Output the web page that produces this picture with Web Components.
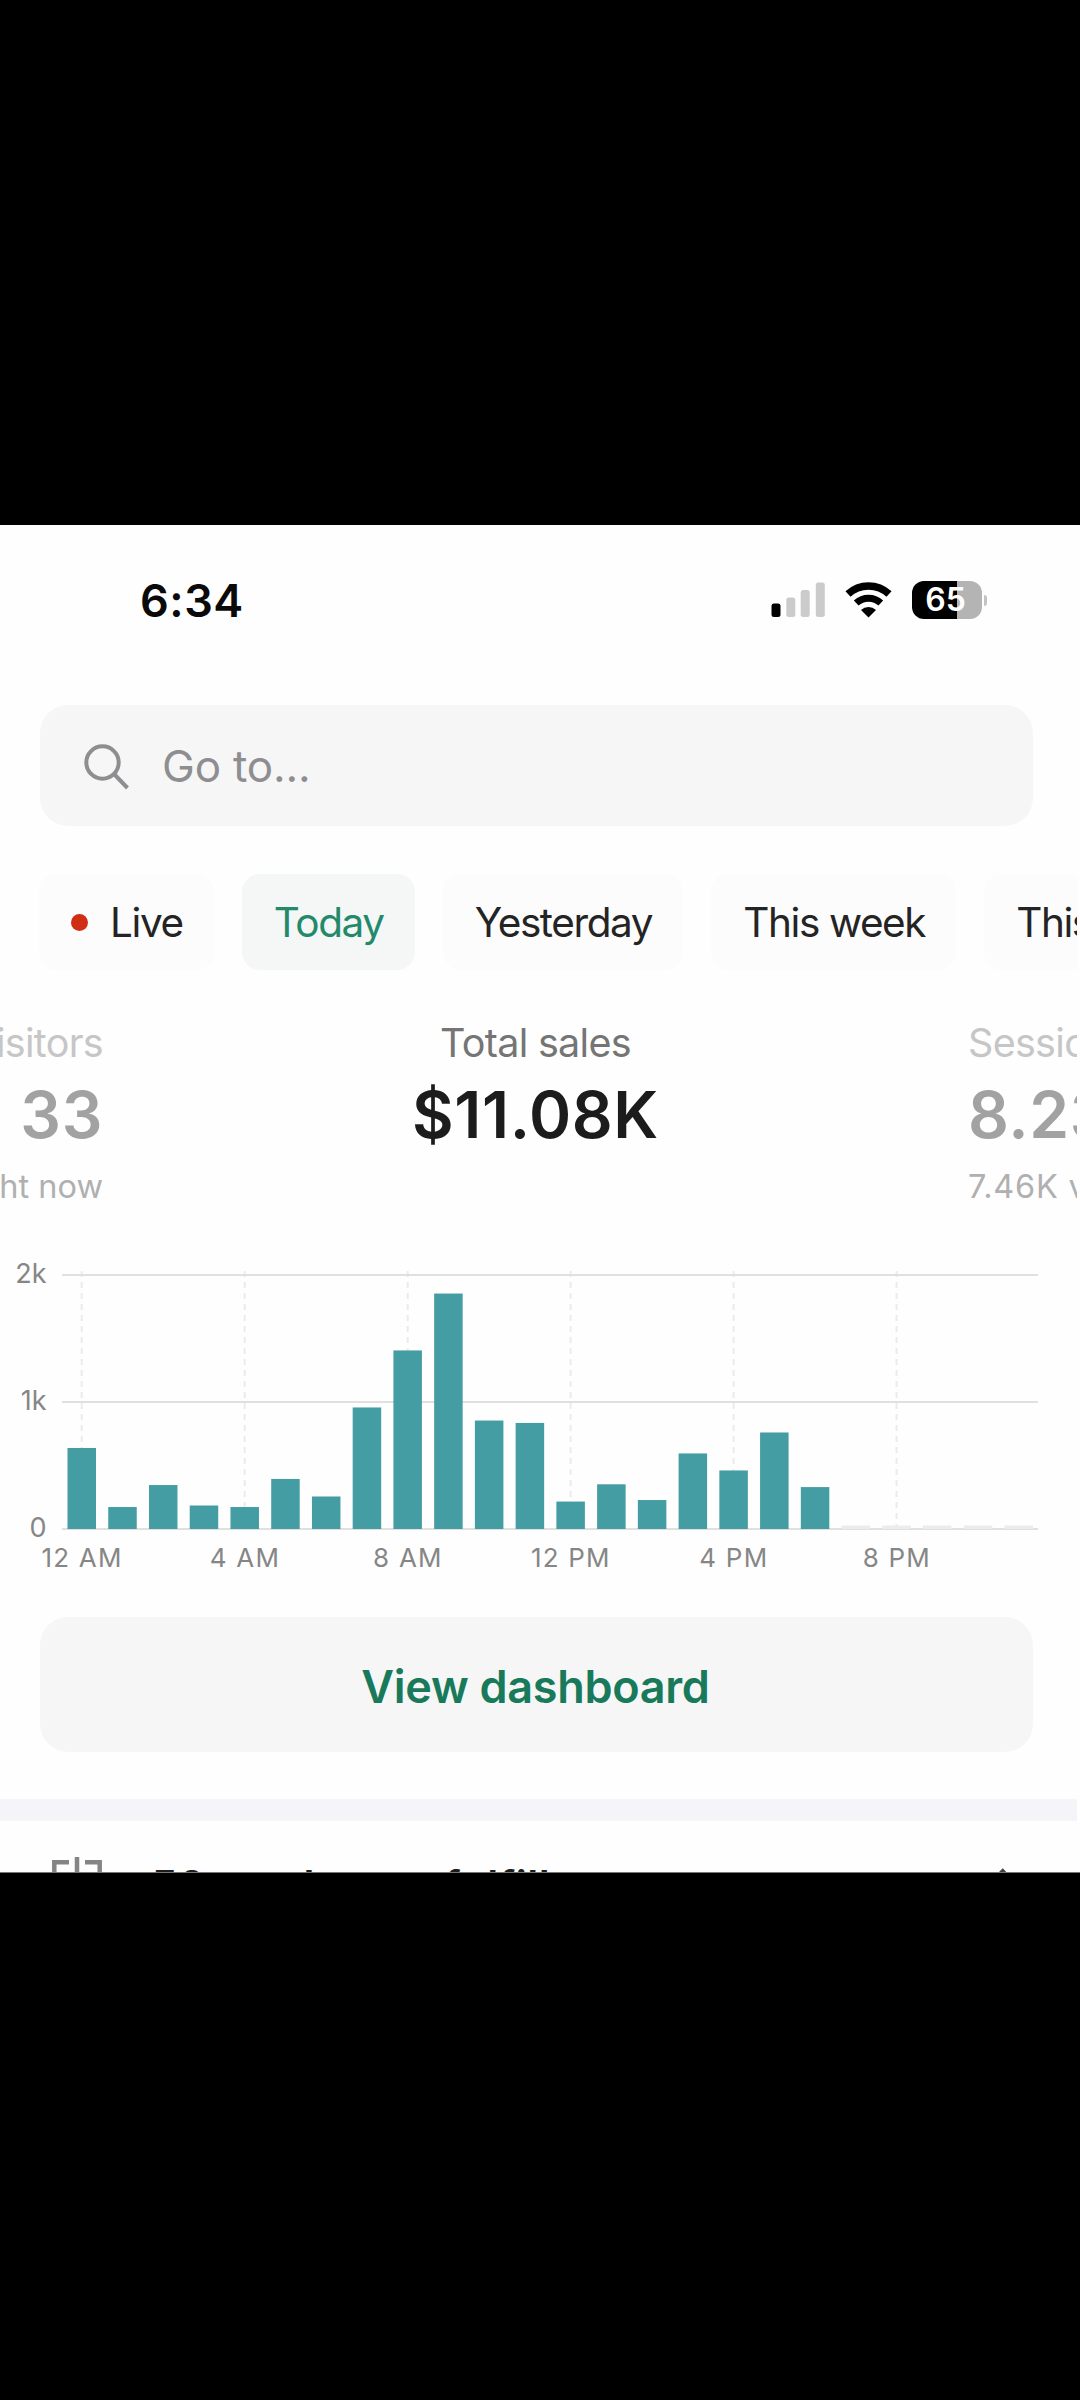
<!DOCTYPE html>
<html lang="en">
<head>
<meta charset="UTF-8">
<title>Store overview</title>
<style>
    body {
        margin: 0;
        background: #000;
        font-family: Inter, "Liberation Sans", sans-serif;
    }
</style>
</head>
<body>
<phone-screen>
    <status-bar time="6:34" battery="65"></status-bar>
    <search-field>Go to...</search-field>
    <range-tabs>
        <range-chip live>Live</range-chip>
        <range-chip selected>Today</range-chip>
        <range-chip>Yesterday</range-chip>
        <range-chip>This week</range-chip>
        <range-chip>This month</range-chip>
    </range-tabs>
    <metric-carousel>
        <metric-card side="left">
            <span slot="label">Visitors</span>
            <span slot="value">33</span>
            <span slot="note">right now</span>
        </metric-card>
        <metric-card>
            <span slot="label">Total sales</span>
            <span slot="value">$11.08K</span>
        </metric-card>
        <metric-card side="right">
            <span slot="label">Sessions</span>
            <span slot="value">8.23K</span>
            <span slot="note">7.46K visitors</span>
        </metric-card>
    </metric-carousel>
    <sales-chart></sales-chart>
    <action-button>View dashboard</action-button>
    <section-divider></section-divider>
    <task-row>50+ orders to fulfill</task-row>
</phone-screen>

<script>
class PhoneScreen extends HTMLElement {
    constructor() {
        super();
        this.attachShadow({ mode: 'open' });
        this.shadowRoot.innerHTML = `
            <style>
                :host {
                    display: block;
                    box-sizing: border-box;
                    width: 1080px;
                    height: 2400px;
                    padding: 525px 0;
                    background: #000;
                    overflow: hidden;
                }
                .screen {
                    height: 1347px;
                    padding-right: 3px;
                    background: #fefefe;
                    border-bottom: 1px solid #777;
                }
                .content {
                    height: 100%;
                    overflow: hidden;
                    display: flex;
                    flex-direction: column;
                }
            </style>
            <div class="screen"><div class="content"><slot></slot></div></div>
        `;
    }
}

class StatusBar extends HTMLElement {
    constructor() {
        super();
        this.attachShadow({ mode: 'open' });
    }

    connectedCallback() {
        this.shadowRoot.innerHTML = `
            <style>
                :host {
                    display: flex;
                    flex: none;
                    align-items: center;
                    justify-content: space-between;
                    height: 150px;
                    padding: 0 90px 0 140px;
                    color: #0a0a0a;
                }
                .time {
                    font-size: 45px;
                    font-weight: 600;
                    letter-spacing: 0.5px;
                }
                .icons {
                    display: flex;
                    align-items: center;
                }
                svg { display: block; }
                .wifi { margin: 0 20px 0 20px; }
                .battery {
                    display: flex;
                    align-items: center;
                    gap: 2px;
                }
                .level {
                    width: 70px;
                    height: 38px;
                    border-radius: 12px;
                    background: linear-gradient(90deg, #000 64%, #b4b4b4 64%);
                    color: #fff;
                    font-size: 32px;
                    font-weight: 600;
                    line-height: 38px;
                    text-align: center;
                    text-indent: -3px;
                }
                .nub {
                    width: 3px;
                    height: 11px;
                    border-radius: 0 3px 3px 0;
                    background: #c4c4c4;
                }
            </style>
            <span class="time">${this.getAttribute('time')}</span>
            <div class="icons">
                <svg width="54" height="36" viewBox="0 0 54 36">
                    <rect x="0.5" y="21.5" width="9" height="13.5" rx="2.5" fill="#000"/>
                    <rect x="15.3" y="15.5" width="9" height="19.5" rx="2.5" fill="#cbcbcb"/>
                    <rect x="29.7" y="8" width="9" height="27" rx="2.5" fill="#cbcbcb"/>
                    <rect x="44.8" y="0.5" width="9" height="34.5" rx="2.5" fill="#cbcbcb"/>
                </svg>
                <svg class="wifi" width="47" height="36" viewBox="0 0 47 36">
                    <path d="M3 12 A30 30 0 0 1 44 12" fill="none" stroke="#000" stroke-width="7.5"/>
                    <path d="M11.2 21 A18.4 18.4 0 0 1 35.8 21" fill="none" stroke="#000" stroke-width="7"/>
                    <path d="M16 28 A11 11 0 0 1 31 28 L23.5 35.5 Z" fill="#000"/>
                </svg>
                <div class="battery">
                    <div class="level">${this.getAttribute('battery')}</div>
                    <div class="nub"></div>
                </div>
            </div>
        `;
    }
}

class SearchField extends HTMLElement {
    constructor() {
        super();
        this.attachShadow({ mode: 'open' });
        this.shadowRoot.innerHTML = `
            <style>
                :host {
                    display: flex;
                    flex: none;
                    align-items: center;
                    box-sizing: border-box;
                    height: 121px;
                    margin: 30px 44px 0 40px;
                    padding: 0 42px;
                    border-radius: 28px;
                    background: #f6f6f6;
                    color: #8e8e91;
                    font-size: 44px;
                    letter-spacing: -0.2px;
                    white-space: nowrap;
                }
                svg { margin-right: 32px; }
            </style>
            <svg width="48" height="48" viewBox="0 0 48 48" fill="none" stroke="#8e8e91" stroke-width="4">
                <circle cx="20.5" cy="20.5" r="16.2"/>
                <path d="M32 32 L45.5 46"/>
            </svg>
            <span><slot></slot></span>
        `;
    }
}

class RangeTabs extends HTMLElement {
    constructor() {
        super();
        this.attachShadow({ mode: 'open' });
        this.shadowRoot.innerHTML = `
            <style>
                :host {
                    display: flex;
                    flex: none;
                    gap: 28px;
                    margin-top: 48px;
                    padding-left: 39px;
                }
            </style>
            <slot></slot>
        `;
    }
}

class RangeChip extends HTMLElement {
    constructor() {
        super();
        this.attachShadow({ mode: 'open' });
    }

    connectedCallback() {
        const dot = this.hasAttribute('live') ? '<i></i>' : '';
        this.shadowRoot.innerHTML = `
            <style>
                :host {
                    display: flex;
                    flex: none;
                    align-items: center;
                    box-sizing: border-box;
                    height: 96px;
                    padding: 0 31px 0 32px;
                    border-radius: 18px;
                    background: #fdfcfd;
                    color: #242424;
                    font-size: 40.5px;
                    letter-spacing: -1.4px;
                    white-space: nowrap;
                }
                :host([selected]) {
                    background: #f5f6f6;
                    color: #228a6b;
                }
                i {
                    width: 17px;
                    height: 17px;
                    margin-right: 22px;
                    border-radius: 50%;
                    background: #cf2d14;
                }
            </style>
            ${dot}<span><slot></slot></span>
        `;
    }
}

class MetricCarousel extends HTMLElement {
    constructor() {
        super();
        this.attachShadow({ mode: 'open' });
        this.shadowRoot.innerHTML = `
            <style>
                :host {
                    display: grid;
                    flex: none;
                    grid-template-columns: 103px 865px 109px;
                    height: 190px;
                    margin-top: 48px;
                }
            </style>
            <slot></slot>
        `;
    }
}

class MetricCard extends HTMLElement {
    constructor() {
        super();
        this.attachShadow({ mode: 'open' });
        this.shadowRoot.innerHTML = `
            <style>
                :host {
                    display: flex;
                    flex-direction: column;
                    align-items: center;
                    min-width: 0;
                    white-space: nowrap;
                    --label: #757575;
                    --value: #1c1c1c;
                    --note-spacing: 0.8px;
                }
                :host([side]) {
                    --label: #c6c6c6;
                    --value: #a2a2a2;
                }
                :host([side="left"]) {
                    align-items: flex-end;
                    --note-spacing: 0;
                }
                :host([side="right"]) { align-items: flex-start; }
                .label {
                    color: var(--label);
                    font-size: 39.5px;
                    line-height: 50px;
                    letter-spacing: -0.7px;
                }
                .value {
                    margin-top: 11px;
                    color: var(--value);
                    font-size: 64px;
                    font-weight: 600;
                    line-height: 72px;
                    letter-spacing: 0.6px;
                }
                .note {
                    margin-top: 16px;
                    color: #b0b0b0;
                    font-size: 32.5px;
                    line-height: 40px;
                    letter-spacing: var(--note-spacing);
                }
            </style>
            <div class="label"><slot name="label"></slot></div>
            <div class="value"><slot name="value"></slot></div>
            <div class="note"><slot name="note"></slot></div>
        `;
    }
}

class SalesChart extends HTMLElement {
    constructor() {
        super();
        this.attachShadow({ mode: 'open' });
        // one value per hour, starting at midnight
        this.sales = [638, 173, 346, 185, 173, 394, 256, 957, 1406, 1854, 854, 835, 216, 352, 228, 595, 461, 760, 330, 0, 0, 0, 0, 0];
        this.hours = { 0: '12 AM', 4: '4 AM', 8: '8 AM', 12: '12 PM', 16: '4 PM', 20: '8 PM' };
    }

    connectedCallback() {
        this.render();
    }

    render() {
        const base = 288;
        const scale = 0.127;
        const barX = i => 67.5 + i * 40.74;

        const guides = Object.keys(this.hours).map(i => {
            const x = barX(i) + 14.25;
            return `<line x1="${x}" y1="30" x2="${x}" y2="${base}" stroke="#ebebeb" stroke-width="2" stroke-dasharray="6 5"/>`;
        }).join('');

        const rows = [[2000, '2k'], [1000, '1k'], [0, '0']].map(([value, text]) => {
            const y = base - value * scale;
            return `<line x1="62" y1="${y}" x2="1038" y2="${y}" stroke="#e0e0e0" stroke-width="2.2"/>
                <text x="46.5" y="${y + 7.5}" text-anchor="end" font-size="27">${text}</text>`;
        }).join('');

        const bars = this.sales.map((value, i) => {
            const h = value ? value * scale : 3.5;
            return `<rect x="${barX(i)}" y="${base - h}" width="28.5" height="${h}" fill="${value ? '#439da3' : '#ececec'}"/>`;
        }).join('');

        const labels = Object.entries(this.hours).map(([i, text]) =>
            `<text x="${barX(i) + 14.5}" y="325.5" text-anchor="middle" font-size="26" letter-spacing="1.2">${text}</text>`
        ).join('');

        this.shadowRoot.innerHTML = `
            <style>
                :host {
                    display: block;
                    flex: none;
                    height: 340px;
                    margin-top: 33px;
                }
                svg { display: block; }
                text { fill: #868686; }
            </style>
            <svg width="1077" height="340" viewBox="0 0 1077 340">${guides}${rows}${bars}${labels}</svg>
        `;
    }
}

class ActionButton extends HTMLElement {
    constructor() {
        super();
        this.attachShadow({ mode: 'open' });
        this.shadowRoot.innerHTML = `
            <style>
                :host {
                    display: flex;
                    flex: none;
                    align-items: center;
                    justify-content: center;
                    box-sizing: border-box;
                    height: 135px;
                    margin: 36px 44px 0 40px;
                    padding: 4px 2px 0 0;
                    border-radius: 28px;
                    background: #f6f6f6;
                    color: #187a5b;
                    font-size: 45px;
                    font-weight: 600;
                    letter-spacing: -0.3px;
                }
            </style>
            <span><slot></slot></span>
        `;
    }
}

class SectionDivider extends HTMLElement {
    constructor() {
        super();
        this.attachShadow({ mode: 'open' });
        this.shadowRoot.innerHTML = `
            <style>
                :host {
                    display: block;
                    flex: none;
                    height: 22px;
                    margin-top: 47px;
                    background: #f5f4f9;
                }
            </style>
        `;
    }
}

class TaskRow extends HTMLElement {
    constructor() {
        super();
        this.attachShadow({ mode: 'open' });
        this.shadowRoot.innerHTML = `
            <style>
                :host {
                    display: flex;
                    flex: none;
                    align-items: center;
                    box-sizing: border-box;
                    height: 128px;
                    padding: 0 58px 0 52px;
                    color: #1c1c1c;
                    font-size: 42px;
                    font-weight: 600;
                    letter-spacing: 0.5px;
                }
                span { flex: 1; margin-left: 49px; }
            </style>
            <svg width="50" height="56" viewBox="0 0 50 56" fill="none" stroke="#858585" stroke-width="4.5">
                <path d="M17 5.3 H2.3 V50 H47.7 V5.3 H33"/>
                <path d="M25 0 V30 M15 22 L25 32 L35 22"/>
            </svg>
            <span><slot></slot></span>
            <svg width="20" height="34" viewBox="0 0 20 34" fill="none" stroke="#444" stroke-width="5">
                <path d="M2 2 L16 17 L2 32"/>
            </svg>
        `;
    }
}

customElements.define('phone-screen', PhoneScreen);
customElements.define('status-bar', StatusBar);
customElements.define('search-field', SearchField);
customElements.define('range-tabs', RangeTabs);
customElements.define('range-chip', RangeChip);
customElements.define('metric-carousel', MetricCarousel);
customElements.define('metric-card', MetricCard);
customElements.define('sales-chart', SalesChart);
customElements.define('action-button', ActionButton);
customElements.define('section-divider', SectionDivider);
customElements.define('task-row', TaskRow);
</script>
</body>
</html>
